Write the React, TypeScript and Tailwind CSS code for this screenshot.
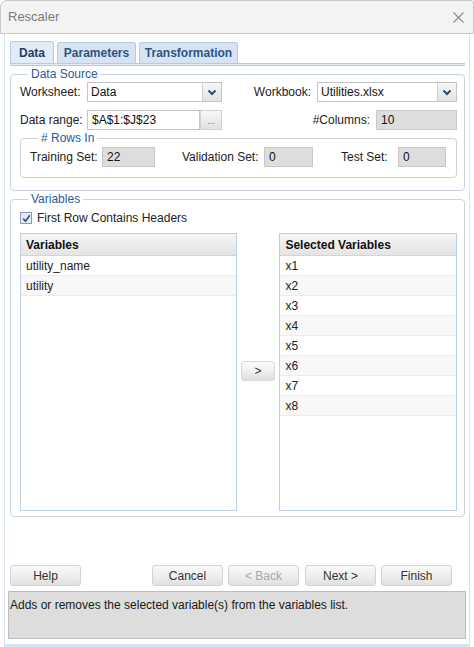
import React from 'react';

const font = "font-['Liberation_Sans',Arial,sans-serif]";

const Chevron = () => (
  <svg width="10" height="7" viewBox="0 0 10 7">
    <path d="M1.5 1.5 L5 5 L8.5 1.5" fill="none" stroke="#2c4d7a" strokeWidth="2" />
  </svg>
);

const Select = ({ value, width }: { value: string; width: string }) => (
  <div className={`${width} h-[20px] flex border border-[#c4c4c4] bg-white`}>
    <div className="flex-1 pl-[3px] flex items-center text-[#111]">{value}</div>
    <div className="w-[19px] border-l border-[#d0d0d0] bg-gradient-to-b from-[#f7f7f7] to-[#e2e2e2] flex items-center justify-center">
      <Chevron />
    </div>
  </div>
);

const ReadOnly = ({ value, width }: { value: string; width: string }) => (
  <div className={`${width} h-[20px] border border-[#c8c8c8] bg-[#dddddd] pl-[4px] flex items-center text-[#111]`}>
    {value}
  </div>
);

const Button = ({ label, width, disabled = false }: { label: string; width: string; disabled?: boolean }) => (
  <div
    className={`${width} h-[21px] rounded-[3px] border border-[#d3d3d3] bg-gradient-to-b from-[#f9f9f9] via-[#efefef] to-[#e0e0e0] flex items-center justify-center ${
      disabled ? 'text-[#a8a8a8]' : 'text-[#333]'
    }`}
  >
    {label}
  </div>
);

const ListBox = ({ title, items, width }: { title: string; items: string[]; width: string }) => (
  <div className={`${width} h-[278px] border border-[#bdd0e6] bg-white flex flex-col`}>
    <div className="h-[22px] shrink-0 bg-gradient-to-b from-[#f5f5f5] to-[#e4e4e4] border-b border-[#d4d4d4] pl-[5px] flex items-center font-bold text-[#111]">
      {title}
    </div>
    {items.map((item, i) => (
      <div
        key={item}
        className={`h-[20px] shrink-0 pl-[5px] flex items-center border-b border-[#ececec] text-[#222] ${
          i % 2 === 1 ? 'bg-[#f8f8f8]' : 'bg-white'
        }`}
      >
        {item}
      </div>
    ))}
  </div>
);

export default function App() {
  return (
    <div className={`${font} w-[474px] h-[647px] bg-white text-[12px] text-[#222] flex flex-col whitespace-nowrap`}>
      {/* title bar */}
      <div className="h-[34px] shrink-0 bg-[#f3f3f3] border border-[#c8c8c8] rounded-tl-[7px] rounded-tr-[3px] flex items-center justify-between pl-[7px] pr-[9px]">
        <span className="text-[13px] text-[#7b7b7b]">Rescaler</span>
        <svg width="11" height="11" viewBox="0 0 11 11">
          <path d="M0.5 0.5 L10.5 10.5 M10.5 0.5 L0.5 10.5" stroke="#8a8a8a" strokeWidth="1.1" />
        </svg>
      </div>

      {/* body */}
      <div className="flex-1 mx-[4px] border-x border-b-[3px] border-[#d6e4f4] pl-[5px] pr-[4px] pt-[7px] flex flex-col">
        {/* tabs */}
        <div className="flex items-end gap-[3px] h-[22px] shrink-0">
          <div className="w-[44px] h-[22px] rounded-t-[3px] border border-b-0 border-[#b4cbe6] bg-[#e2ecf8] flex items-center justify-center font-bold text-[#1f3f66]">
            Data
          </div>
          <div className="w-[79px] h-[21px] rounded-t-[3px] border border-b-0 border-[#b4cbe6] bg-[#d7e3f2] flex items-center justify-center font-bold text-[#2d5584]">
            Parameters
          </div>
          <div className="w-[99px] h-[21px] rounded-t-[3px] border border-b-0 border-[#b4cbe6] bg-[#d7e3f2] flex items-center justify-center font-bold text-[#2d5584]">
            Transformation
          </div>
        </div>
        <div className="h-[3px] shrink-0 border-t border-b border-[#b4cbe6] bg-[#e2ecf8]" />

        {/* data source */}
        <fieldset className="mt-[1px] border border-[#c9d3df] rounded-[4px] pl-[9px] pr-[7px] pb-[12px] min-w-0">
          <legend className="ml-[8px] px-[3px] text-[#2b5b98] leading-[14px]">Data Source</legend>
          <div className="flex items-center mt-[1px]">
            <span className="w-[67px]">Worksheet:</span>
            <Select value="Data" width="w-[135px]" />
            <span className="flex-1 text-right pr-[6px]">Workbook:</span>
            <Select value="Utilities.xlsx" width="w-[140px]" />
          </div>
          <div className="flex items-center mt-[8px]">
            <span className="w-[67px]">Data range:</span>
            <div className="w-[113px] h-[20px] border border-[#c4c4c4] bg-white pl-[4px] flex items-center text-[#111]">
              $A$1:$J$23
            </div>
            <div className="w-[22px] h-[20px] border border-[#d0d0d0] bg-gradient-to-b from-[#f7f7f7] to-[#e2e2e2] flex items-end justify-center pb-[3px] text-[9px] leading-[9px] text-[#666]">
              ...
            </div>
            <span className="flex-1 text-right pr-[6px]">#Columns:</span>
            <ReadOnly value="10" width="w-[81px]" />
          </div>
          <fieldset className="mt-[1px] border border-[#c9d3df] rounded-[4px] pl-[9px] pr-[10px] pb-[10px] min-w-0">
            <legend className="ml-[8px] px-[3px] text-[#2b5b98] leading-[14px]"># Rows In</legend>
            <div className="flex items-center mt-[2px]">
              <span className="w-[72px]">Training Set:</span>
              <ReadOnly value="22" width="w-[53px]" />
              <span className="ml-[27px] w-[82px]">Validation Set:</span>
              <ReadOnly value="0" width="w-[49px]" />
              <span className="ml-[28px] w-[57px]">Test Set:</span>
              <ReadOnly value="0" width="w-[48px]" />
            </div>
          </fieldset>
        </fieldset>

        {/* variables */}
        <fieldset className="mt-[1px] border border-[#c9d3df] rounded-[4px] pl-[9px] pr-[7px] pb-[5px] min-w-0">
          <legend className="ml-[8px] px-[3px] text-[#2b5b98] leading-[14px]">Variables</legend>
          <div className="flex items-center gap-[5px] mt-[3px]">
            <div className="w-[12px] h-[12px] border border-[#8a9bb3] bg-[#e4ebf5] flex items-center justify-center">
              <svg width="9" height="9" viewBox="0 0 9 9">
                <path d="M1.2 4.6 L3.5 7.2 L7.8 1.2" fill="none" stroke="#34507a" strokeWidth="1.6" />
              </svg>
            </div>
            <span className="text-[#222]">First Row Contains Headers</span>
          </div>
          <div className="flex items-start mt-[6px]">
            <ListBox title="Variables" items={['utility_name', 'utility']} width="w-[217px]" />
            <div className="w-[43px] self-stretch flex items-center justify-center">
              <div className="w-[34px] h-[20px] mt-[-2px] rounded-[3px] border border-[#d8d8d8] bg-gradient-to-b from-[#fafafa] via-[#f0f0f0] to-[#dedede] flex items-center justify-center text-[#333]">
                &gt;
              </div>
            </div>
            <ListBox
              title="Selected Variables"
              items={['x1', 'x2', 'x3', 'x4', 'x5', 'x6', 'x7', 'x8']}
              width="w-[178px]"
            />
          </div>
        </fieldset>

        {/* buttons */}
        <div className="flex items-center mt-[48px]">
          <Button label="Help" width="w-[71px]" />
          <div className="w-[71px]" />
          <Button label="Cancel" width="w-[71px]" />
          <div className="w-[5px]" />
          <Button label="< Back" width="w-[71px]" disabled />
          <div className="w-[6px]" />
          <Button label="Next >" width="w-[71px]" />
          <div className="w-[5px]" />
          <Button label="Finish" width="w-[71px]" />
        </div>

        {/* status */}
        <div className="mt-[5px] ml-[-2px] mr-[-1px] h-[48px] border border-[#bdbdbd] bg-[#dddddd] px-[1px] pt-[4px] text-[#1a1a1a]">
          Adds or removes the selected variable(s) from the variables list.
        </div>
      </div>
    </div>
  );
}
